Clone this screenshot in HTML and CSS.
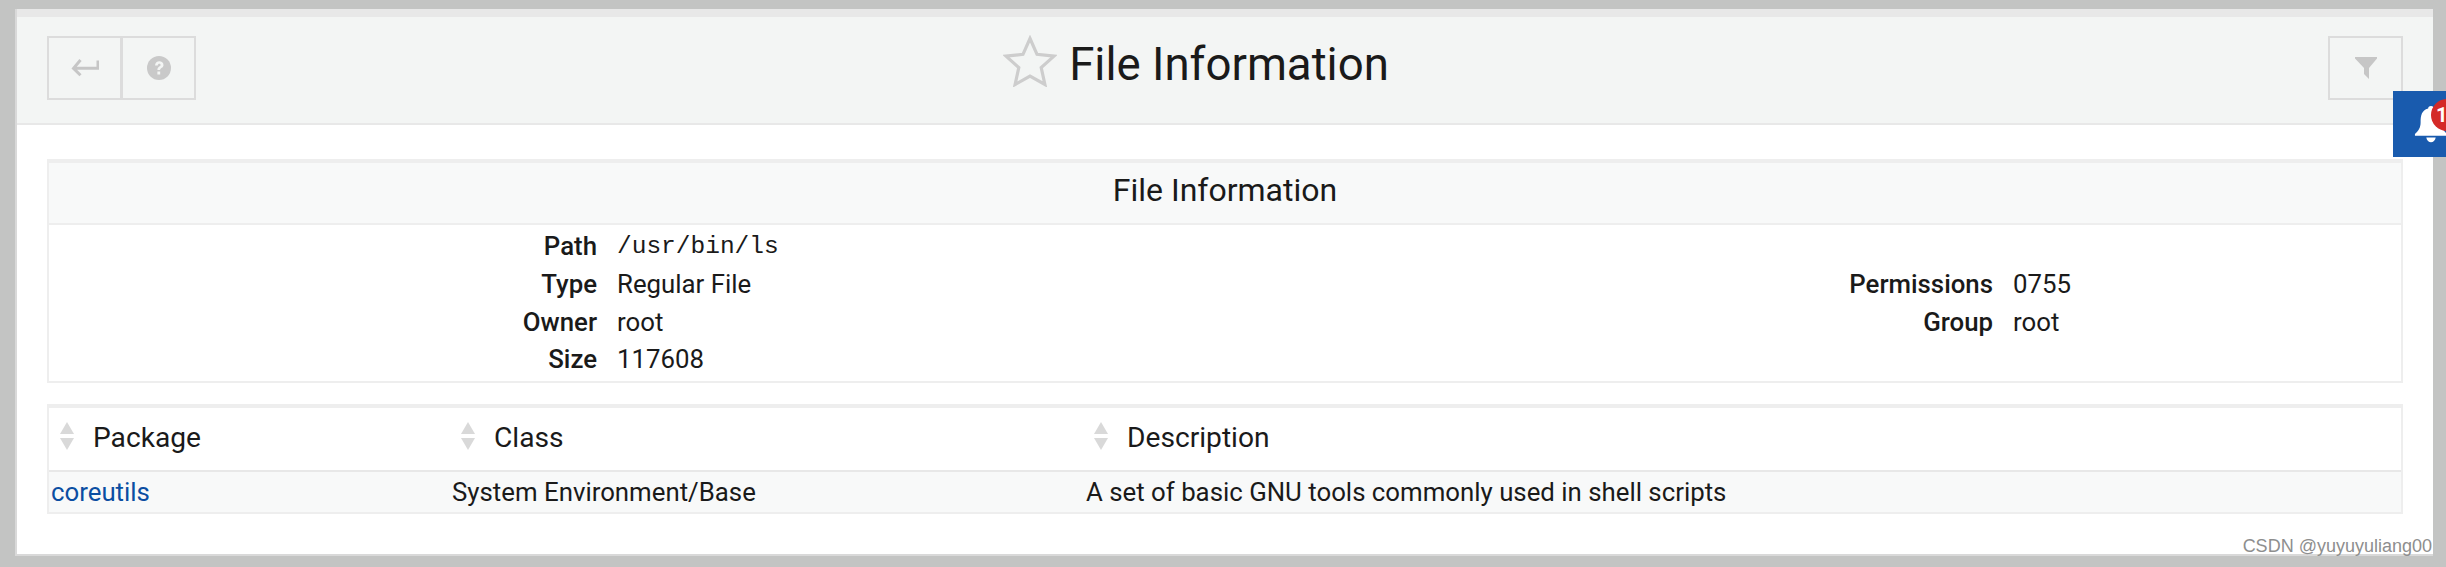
FILE: index.html
```html
<!DOCTYPE html>
<html lang="en">
<head>
<meta charset="utf-8">
<title>File Information</title>
<link rel="stylesheet" href="styles.css">
</head>
<body>
<div class="window">
  <header class="topbar">
    <div class="btn-group">
      <button class="btn" type="button" aria-label="Back">
        <svg width="28" height="18" viewBox="0 0 28 18"><path d="M27 2v7.8H3M9.500 1.500 2.500 9.800l7 7" transform="translate(0 -.5)" fill="none" stroke="#c6c6c6" stroke-width="3"/></svg>
      </button>
      <button class="btn" type="button" aria-label="Help">
        <svg width="24" height="24" viewBox="0 0 24 24"><circle cx="12" cy="12" r="12" fill="#c9c9c9"/><path d="M8 9.600c0-5.600 8.500-5.600 8.500-.6 0 3.200-3.400 2.800-3.400 5h-2.700c0-3.700 3.200-3.300 3.200-5 0-1.800-2.800-1.600-2.900.6z" fill="#f3f5f4"/><rect x="10.400" y="15.500" width="2.800" height="3" fill="#f3f5f4"/></svg>
      </button>
    </div>
    <h1 class="page-title">
      <svg class="star" width="54" height="52" viewBox="0 0 54 52"><path d="M27 3.500l7 15.800 17 1.800-12.800 11.500 3.700 16.900L27 41l-14.900 8.500 3.700-16.900L3 21.100l17-1.800z" fill="none" stroke="#cdcdcd" stroke-width="3.200"/></svg>
      <span>File Information</span>
    </h1>
    <button class="btn" type="button" aria-label="Filter">
      <svg width="22" height="22" viewBox="0 0 22 22"><path d="M0 0h22v1.500L14 11v11l-5-5V11L0 1.500z" fill="#c6c6c6"/></svg>
    </button>
  </header>

  <main class="content">
    <section class="panel">
      <h2 class="panel-title">File Information</h2>
      <dl class="info">
        <dt class="info-label">Path</dt><dd class="info-value mono">/usr/bin/ls</dd><dt></dt><dd></dd>
        <dt class="info-label">Type</dt><dd class="info-value">Regular File</dd><dt class="info-label">Permissions</dt><dd class="info-value">0755</dd>
        <dt class="info-label">Owner</dt><dd class="info-value">root</dd><dt class="info-label">Group</dt><dd class="info-value">root</dd>
        <dt class="info-label">Size</dt><dd class="info-value">117608</dd><dt></dt><dd></dd>
      </dl>
    </section>

    <table class="grid-table">
      <colgroup><col class="col-a"><col class="col-b"><col></colgroup>
      <thead>
        <tr>
          <th><span class="sort"></span>Package</th>
          <th class="th-class"><span class="sort"></span>Class</th>
          <th><span class="sort"></span>Description</th>
        </tr>
      </thead>
      <tbody>
        <tr>
          <td class="td-first"><a href="#">coreutils</a></td>
          <td>System Environment/Base</td>
          <td>A set of basic GNU tools commonly used in shell scripts</td>
        </tr>
      </tbody>
    </table>
  </main>

  <div class="notify">
    <svg width="34" height="38" viewBox="0 0 36 42" preserveAspectRatio="none"><path d="M18 1c-2 0-3 1-3 3C8 6 7 12 7 19c0 6-2 9-6 13v2h34v-2c-4-4-6-7-6-13 0-7-1-13-8-15 0-2-1-3-3-3zM13 36c1 7 9 7 10 0z" fill="#fff"/></svg>
    <span class="notify-badge">1</span>
  </div>
  <div class="watermark">CSDN @yuyuyuliang00</div>
</div>
</body>
</html>
```
FILE: styles.css
```css
* { box-sizing: border-box; }
html, body { height: 100%; }
body {
  margin: 0;
  padding: 9px 13px 11px 15px;
  background: #c3c4c3;
  font-family: Roboto, "Liberation Sans", sans-serif;
  color: #1a1a1a;
  overflow: hidden;
}
.window {
  position: relative;
  height: 547px;
  background: #fff;
  border-left: 2px solid #d9d9d9;
  border-bottom: 2px solid #d9d9d9;
}
.topbar {
  height: 116px;
  background: #f3f5f4;
  border-top: 8px solid #e8e8e8;
  border-bottom: 2px solid #e8e8e8;
  padding: 19px 30px 0 30px;
  display: flex;
  align-items: flex-start;
  justify-content: space-between;
}
.btn-group { display: flex; }
.btn {
  width: 75px;
  height: 64px;
  padding: 0;
  background: transparent;
  border: 2px solid #dcdcdc;
  display: flex;
  align-items: center;
  justify-content: center;
}
.btn-group .btn + .btn { margin-left: -1px; }
.page-title {
  margin: -3px 132px 0 0;
  display: flex;
  align-items: center;
  gap: 12px;
  height: 64px;
  font-size: 45.600px;
  font-weight: 400;
  line-height: 64px;
}
.star { margin-bottom: 8px; }
.content { padding: 34px 30px 0 30px; }
.panel {
  border: 2px solid #eeeeee;
  border-top-width: 4px;
}
.panel-title {
  margin: 0;
  height: 62px;
  background: #f8f9f9;
  border-bottom: 2px solid #eeeeee;
  font-size: 32px;
  font-weight: 400;
  line-height: 54px;
  text-align: center;
}
.info {
  margin: 0;
  padding: 3px 0 2px;
  display: grid;
  grid-template-columns: 548px 810px 586px 1fr;
  grid-auto-rows: 37.800px;
  font-size: 25.800px;
  line-height: 37.800px;
}
.info dd { margin: 0; }
.info-label { text-align: right; font-weight: 500; }
.info-value { padding-left: 20px; font-weight: 400; }
.info-value.mono { font-family: "Liberation Mono", "DejaVu Sans Mono", monospace; font-size: 24.500px; }
.grid-table {
  margin-top: 21px;
  width: 100%;
  border-collapse: separate;
  border-spacing: 0;
  table-layout: fixed;
  border: 2px solid #eeeeee;
  border-top-width: 4px;
  border-bottom-width: 2px;
  font-size: 25.800px;
}
.col-a { width: 400px; }
.col-b { width: 634px; }
.grid-table th {
  height: 64px;
  padding: 0 0 3px 11px;
  text-align: left;
  font-size: 28.160px;
  font-weight: 400;
  border-bottom: 2px solid #e8e8e8;
}
.grid-table .th-class { padding-left: 12px; }
.grid-table td {
  height: 40px;
  padding: 0 3px;
  background: #f8f9f9;
}
.grid-table .td-first { padding-left: 2px; }
.grid-table a { color: #0b4ea2; text-decoration: none; }
.sort {
  display: inline-block;
  position: relative;
  vertical-align: -3px;
  width: 15px;
  height: 28px;
  margin-right: 18px;
}
.sort::before,
.sort::after {
  content: "";
  position: absolute;
  left: 0;
  border-left: 7.500px solid transparent;
  border-right: 7.500px solid transparent;
}
.sort::before { top: 0; border-bottom: 12px solid #d9d9d9; }
.sort::after { bottom: 0; border-top: 12px solid #d9d9d9; }
.notify {
  position: absolute;
  top: 82px;
  right: -13px;
  width: 53px;
  height: 66px;
  background: #195bae;
  overflow: hidden;
  padding: 14px 0 0 21px;
}
.notify svg { display: block; }
.notify-badge {
  position: absolute;
  top: 8px;
  left: 38px;
  width: 32px;
  height: 32px;
  border-radius: 50%;
  background: #d42a27;
  color: #fff;
  font-size: 20px;
  font-weight: 700;
  line-height: 32px;
  padding-left: 5px;
}
.watermark {
  position: absolute;
  right: 1px;
  bottom: -2px;
  font-family: "Liberation Sans", sans-serif;
  font-size: 18px;
  color: #8e8e8e;
  line-height: 20px;
}
```
